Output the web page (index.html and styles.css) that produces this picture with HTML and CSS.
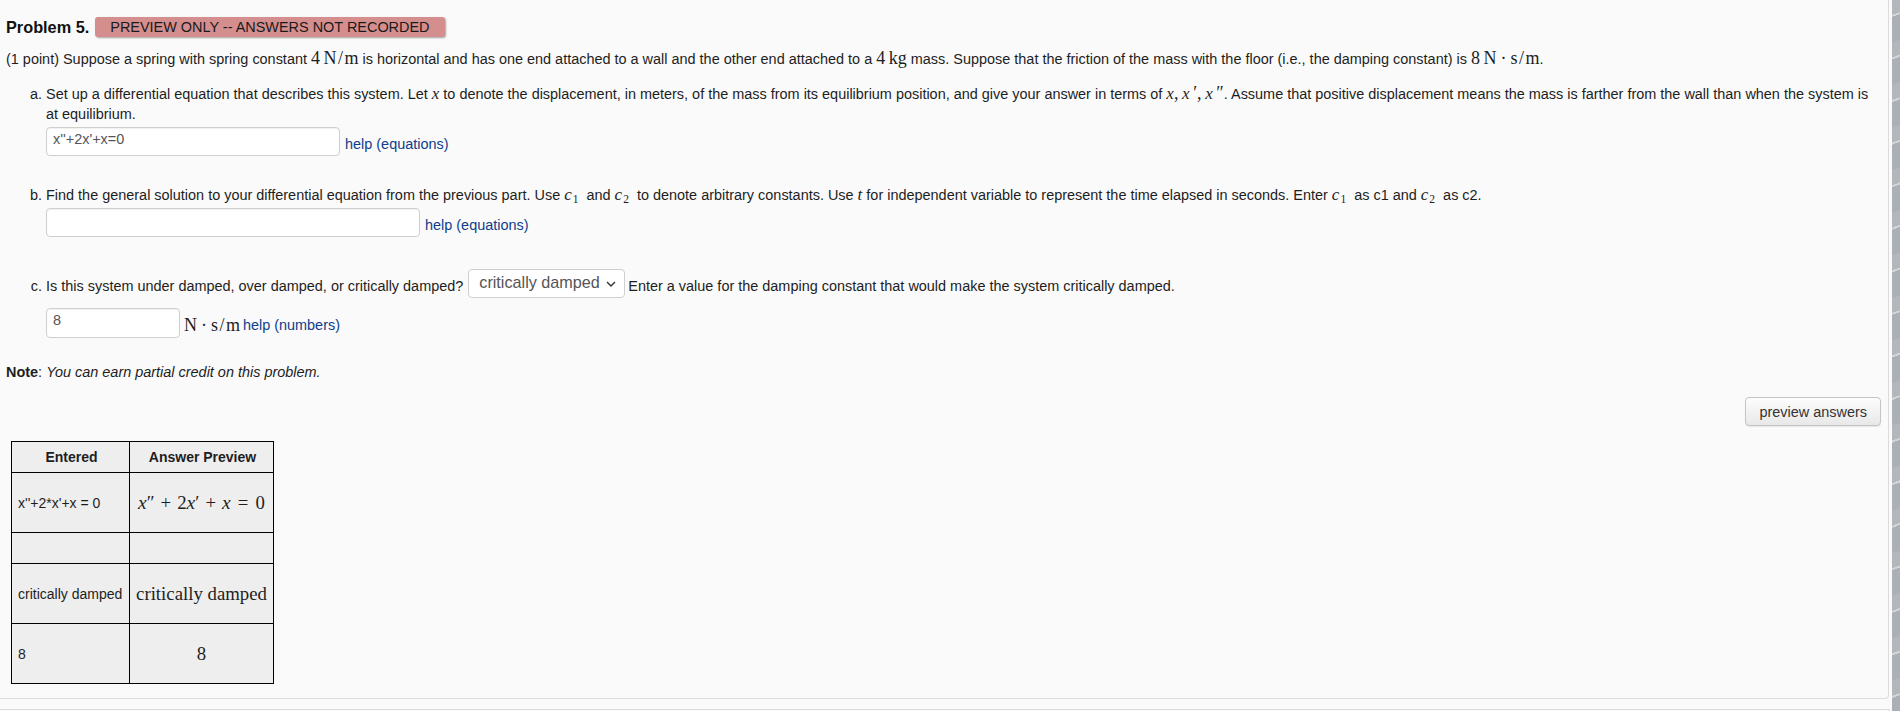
FILE: index.html
```html
<!DOCTYPE html>
<html lang="en">
<head>
<meta charset="utf-8">
<title>Problem 5</title>
<link rel="stylesheet" href="styles.css">
</head>
<body>
<div class="page">
  <div class="main">
    <div class="panel">
      <div class="problem-head">
        <span class="ptitle">Problem 5.</span>
        <span class="badge">PREVIEW ONLY -- ANSWERS NOT RECORDED</span>
      </div>
      <p class="intro">(1 point) Suppose a spring with spring constant <span class="mr">4<span class="sp"></span>N<span class="sl">/</span>m</span> is horizontal and has one end attached to a wall and the other end attached to a <span class="mr">4<span class="sp"></span>kg</span> mass. Suppose that the friction of the mass with the floor (i.e., the damping constant) is <span class="mr">8<span class="sp"></span>N<span class="dot">·</span>s<span class="sl">/</span>m</span>.</p>
      <ol class="parts">
        <li class="part part-a">Set up a differential equation that describes this system. Let <span class="mi">x</span> to denote the displacement, in meters, of the mass from its equilibrium position, and give your answer in terms of <span class="mi">x</span><span class="mr">,<span class="sp"></span></span><span class="mi">x</span><span class="mr"><span class="sp"></span>′,<span class="sp"></span></span><span class="mi">x</span><span class="mr"><span class="sp"></span>″</span>. Assume that positive displacement means the mass is farther from the wall than when the system is at equilibrium.
          <div class="answer-row">
            <input class="ans ans-a" type="text" value="x''+2x'+x=0">
            <a class="help" href="#">help (equations)</a>
          </div>
        </li>
        <li class="part part-b">Find the general solution to your differential equation from the previous part. Use <span class="mi">c</span><sub class="sb">1</sub> and <span class="mi">c</span><sub class="sb">2</sub> to denote arbitrary constants. Use <span class="mi">t</span> for independent variable to represent the time elapsed in seconds. Enter <span class="mi">c</span><sub class="sb">1</sub> as c1 and <span class="mi">c</span><sub class="sb">2</sub> as c2.
          <div class="answer-row">
            <input class="ans ans-b" type="text" value="">
            <a class="help" href="#">help (equations)</a>
          </div>
        </li>
        <li class="part part-c"><div class="c-line"><span class="c-text">Is this system under damped, over damped, or critically damped?</span><span class="sel">critically damped<svg class="chev" viewBox="0 0 10 6" width="10" height="6"><path d="M1 1 L5 5 L9 1" fill="none" stroke="#333" stroke-width="1.4"/></svg></span><span class="c-text">Enter a value for the damping constant that would make the system critically damped.</span></div>
          <div class="answer-row row-num">
            <input class="ans ans-c" type="text" value="8">
            <span class="unit">N<span class="dot">·</span>s<span class="sl">/</span>m</span>
            <a class="help" href="#">help (numbers)</a>
          </div>
        </li>
      </ol>
      <p class="note"><b>Note</b>: <i>You can earn partial credit on this problem.</i></p>
      <div class="btn-row"><button class="btn" type="button">preview answers</button></div>
      <table class="results">
        <tr class="r-head"><th class="c1">Entered</th><th class="c2">Answer Preview</th></tr>
        <tr class="r-tall"><td class="c1">x''+2*x'+x = 0</td><td class="c2 math"><span class="mi">x</span>″<span class="op">+</span>2<span class="mi">x</span>′<span class="op">+</span><span class="mi">x</span><span class="rel">=</span>0</td></tr>
        <tr class="r-empty"><td class="c1"></td><td class="c2"></td></tr>
        <tr class="r-tall"><td class="c1">critically damped</td><td class="c2 math">critically damped</td></tr>
        <tr class="r-tall"><td class="c1">8</td><td class="c2 math">8</td></tr>
      </table>
    </div>
    <div class="next"></div>
  </div>
  <div class="side"></div>
</div>
</body>
</html>
```
FILE: styles.css
```css
html, body {
  margin: 0;
  padding: 0;
}
body {
  background: #fafafa;
  font-family: "Liberation Sans", Arial, sans-serif;
  font-size: 14.45px;
  color: #1e1e1e;
}
.page {
  display: flex;
  width: 1900px;
  height: 711px;
  overflow: hidden;
}
.main {
  width: 1892px;
  background: #fafafa;
}
.panel {
  box-sizing: border-box;
  width: 1889px;
  height: 699px;
  padding: 17px 7px 0 6px;
  border-right: 1px solid #dcdcdc;
  border-bottom: 1px solid #dcdcdc;
  border-bottom-right-radius: 4px;
}
.next {
  margin-top: 10px;
  width: 1889px;
  border-top: 1px solid #dcdcdc;
  border-right: 1px solid #dcdcdc;
  height: 4px;
}
.side {
  flex: 1;
  background: repeating-linear-gradient(160deg, #b3b7bc 0 14px, #d2d5d8 14px 16px, #aab0b5 16px 40px);
}
.problem-head {
  display: flex;
  align-items: center;
  height: 20px;
  gap: 6px;
}
.ptitle {
  font-weight: bold;
  font-size: 16.3px;
  color: #111;
}
.badge {
  background: #d58e8e;
  color: #1a1a1a;
  font-size: 14.45px;
  line-height: 20px;
  padding: 0 15px;
  border-radius: 3px;
  box-shadow: 1px 1px 2px rgba(0, 0, 0, 0.35);
}
.intro {
  margin: 12px 0 0;
  line-height: 20px;
}
.mr {
  font-family: "Liberation Serif", "Times New Roman", serif;
  font-size: 18px;
  line-height: 1;
}
.mi {
  font-family: "Liberation Serif", "Times New Roman", serif;
  font-style: italic;
  font-size: 17px;
  line-height: 1;
}
.sp {
  display: inline-block;
  width: 0.2em;
}
.sl {
  margin: 0 0.08em;
}
.dot {
  margin: 0 0.222em;
}
.sb {
  font-family: "Liberation Serif", "Times New Roman", serif;
  font-size: 11.5px;
  vertical-align: -3px;
  line-height: 0;
  margin: 0 4px 0 1px;
}
.parts {
  margin: 15px 0 0;
  padding-left: 40px;
  list-style: lower-alpha;
}
.part {
  line-height: 20px;
}
.part-b {
  margin-top: 29px;
}
.part-c {
  margin-top: 32px;
}
.answer-row {
  display: flex;
  align-items: flex-end;
  margin-top: 3px;
}
.ans {
  box-sizing: border-box;
  height: 29px;
  padding: 0 6px 6px;
  border: 1px solid #cfcfcf;
  border-radius: 4px;
  background: #fff;
  font-family: "Liberation Sans", Arial, sans-serif;
  font-size: 14.45px;
  color: #555;
  box-shadow: inset 0 1px 1px rgba(0, 0, 0, 0.06);
}
.ans-a { width: 294px; }
.ans-b { width: 374px; }
.ans-c { width: 134px; height: 30px; }
.help {
  color: #0f3d8c;
  text-decoration: none;
  margin: 0 0 2px 5px;
}
.c-line {
  display: flex;
  align-items: flex-end;
  height: 29px;
}
.c-text {
  margin-bottom: 2px;
}
.sel {
  box-sizing: border-box;
  display: flex;
  align-items: center;
  justify-content: space-between;
  width: 157px;
  height: 29px;
  margin: 0 3px 0 5px;
  padding: 0 8px 4px 10px;
  border: 1px solid #cfcfcf;
  border-radius: 4px;
  background: #fff;
  font-size: 16.2px;
  color: #555;
}
.chev {
  margin-top: 4px;
}
.row-num {
  margin-top: 10px;
}
.unit {
  font-family: "Liberation Serif", "Times New Roman", serif;
  font-size: 18px;
  margin: 0 0 3px 4px;
}
.row-num .help {
  margin-left: 3px;
  margin-bottom: 3px;
}
.note {
  margin: 24px 0 0;
  line-height: 20px;
}
.btn-row {
  display: flex;
  justify-content: flex-end;
  margin-top: 15px;
}
.btn {
  box-sizing: border-box;
  height: 29px;
  padding: 0 13px;
  border: 1px solid #c4c4c4;
  border-radius: 4px;
  background: linear-gradient(#fdfdfd, #e8e8e8);
  font-family: "Liberation Sans", Arial, sans-serif;
  font-size: 14.45px;
  color: #333;
  box-shadow: 0 1px 1px rgba(0, 0, 0, 0.08);
}
.results {
  margin: 15px 0 0 5px;
  border-collapse: collapse;
}
.results th, .results td {
  border: 1px solid #000;
  background: #eee;
  padding: 0 4px 0 6px;
}
.results th {
  font-weight: bold;
  font-size: 14px;
  text-align: center;
}
.results .c1 { width: 107px; }
.results .c2 { width: 133px; }
.results td.c1 {
  font-size: 14px;
  text-align: left;
}
.results td.math {
  text-align: center;
  font-family: "Liberation Serif", "Times New Roman", serif;
  font-size: 18.8px;
  padding: 0 4px;
}
.results td.math .mi {
  font-size: 19.5px;
}
.op {
  margin: 0 0.32em;
}
.rel {
  margin: 0 0.38em;
}
.r-head { height: 31px; }
.r-tall { height: 60px; }
.r-empty { height: 31px; }
```
